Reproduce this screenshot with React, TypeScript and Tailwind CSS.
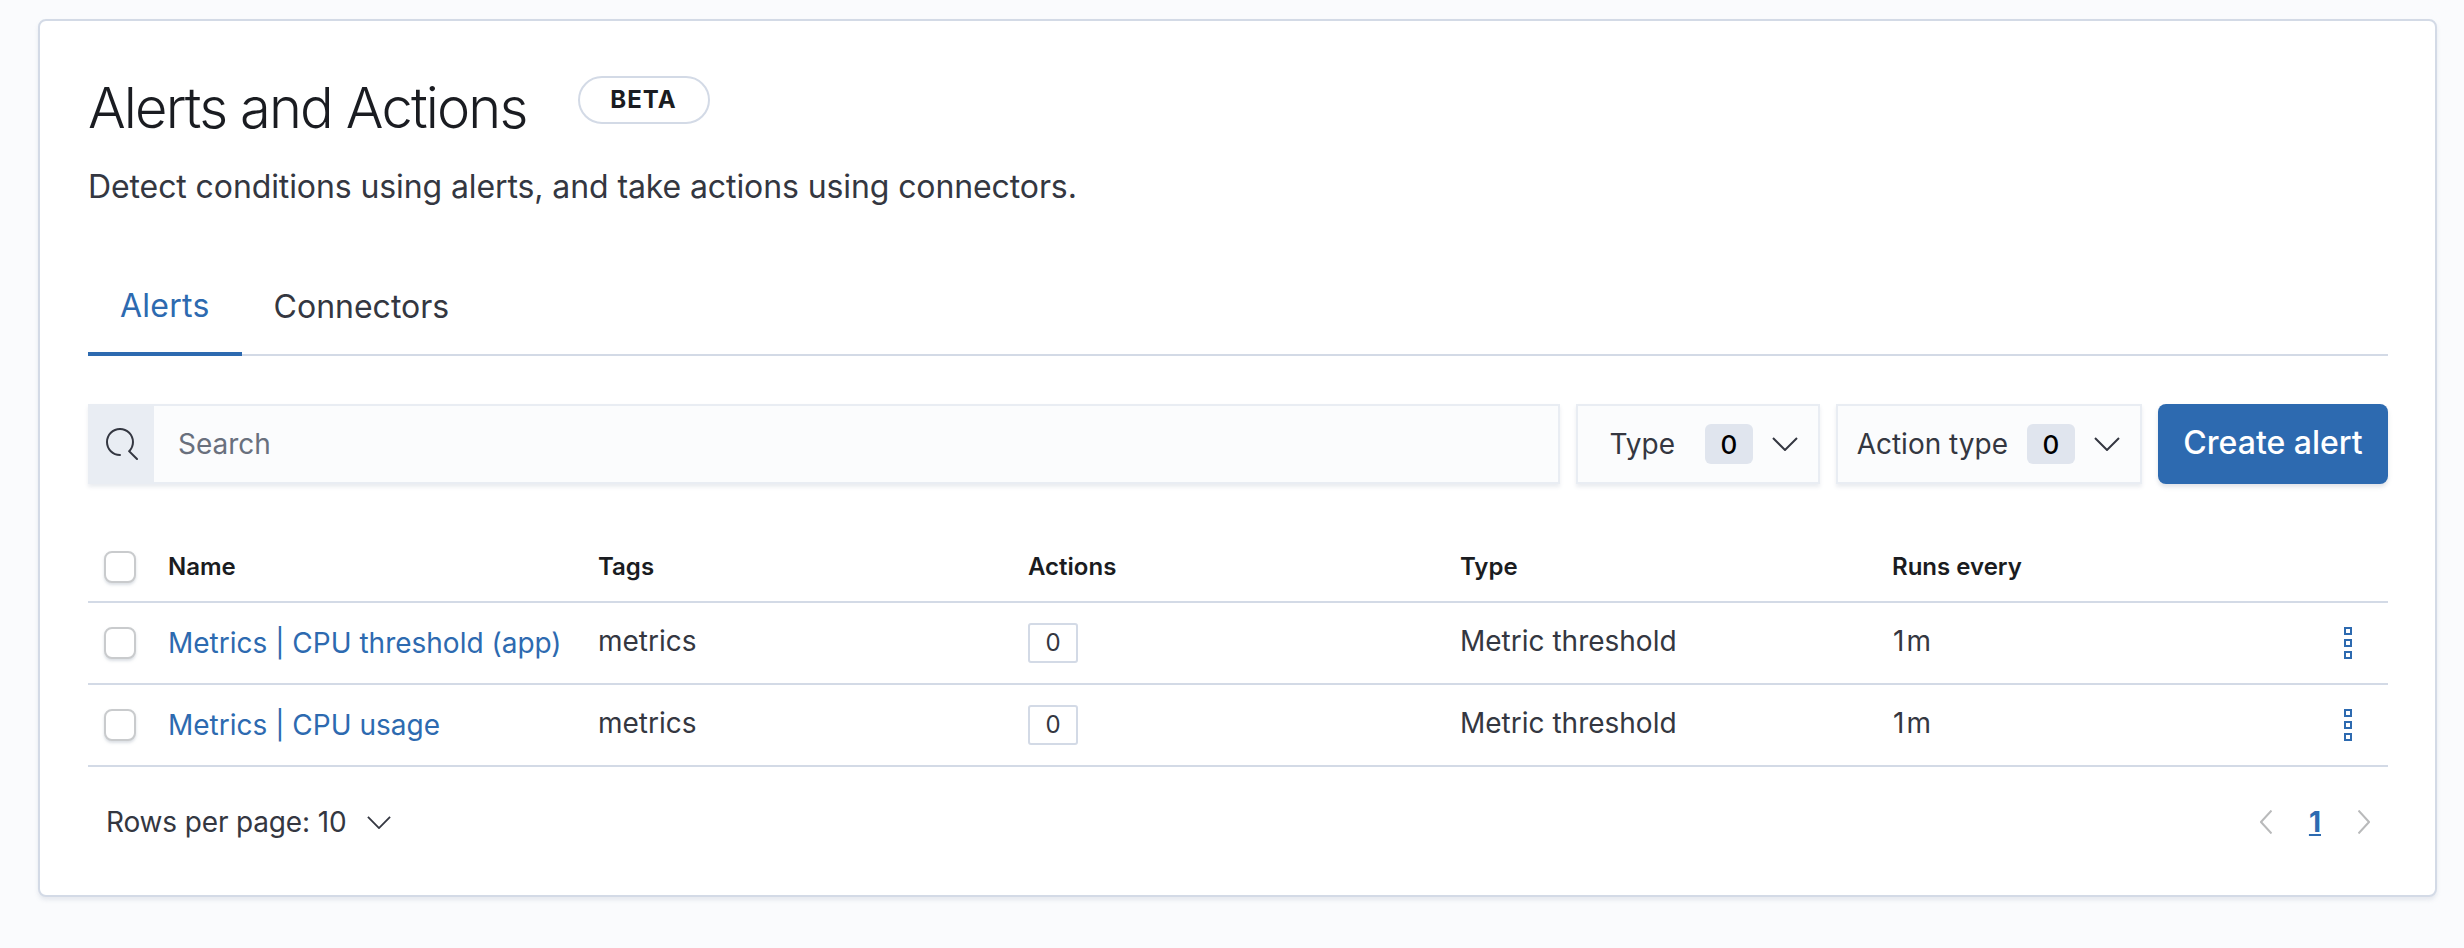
const FONT = "font-['Inter',sans-serif]";

const Chevron = ({ className }: { className?: string }) => (
  <svg viewBox="0 0 26 14" fill="none" stroke="currentColor" strokeWidth="2" className={className}>
    <path d="M1 1l12 12L25 1" />
  </svg>
);

const SearchIcon = () => (
  <svg viewBox="0 0 16 16" className="h-8 w-8 text-[#343741]" fill="currentColor">
    <path d="M11.271 11.978l3.872 3.873a.502.502 0 00.708 0 .502.502 0 000-.708l-3.565-3.564c2.38-2.747 2.267-6.923-.342-9.532-2.73-2.73-7.17-2.73-9.898 0-2.728 2.729-2.728 7.17 0 9.9a6.955 6.955 0 004.949 2.05.5.5 0 000-1 5.96 5.96 0 01-4.242-1.757 6.01 6.01 0 010-8.486 6.004 6.004 0 018.484 0 6.01 6.01 0 010 8.486.5.5 0 00.034.738z" />
  </svg>
);

const Checkbox = () => (
  <div className="h-8 w-8 rounded-[8px] border-2 border-[#c9cbcd] bg-white shadow-[0_2px_3px_rgba(152,162,179,0.35)]" />
);

const Dots = () => (
  <div className="flex flex-col gap-1">
    <div className="h-2 w-2 border-2 border-[#2d6ab0]" />
    <div className="h-2 w-2 border-2 border-[#2d6ab0]" />
    <div className="h-2 w-2 border-2 border-[#2d6ab0]" />
  </div>
);

const FilterButton = ({ label, widthClass, gapClass }: { label: string; widthClass: string; gapClass: string }) => (
  <div className={`flex h-[80px] items-center justify-end border-2 border-[#e9edf3] bg-[#fbfcfd] pr-[20px] shadow-[0_3px_4px_rgba(152,162,179,0.2)] ${widthClass}`}>
    <span className={`text-[28px] whitespace-nowrap text-[#343741] ${gapClass}`}>{label}</span>
    <span className="flex h-10 w-12 items-center justify-center rounded-[6px] bg-[#e0e5ee] text-[26px] font-medium text-[#000000]">0</span>
    <Chevron className="ml-[19px] h-[14px] w-[26px] text-[#343741]" />
  </div>
);

const HeaderCell = ({ children }: { children: React.ReactNode }) => (
  <div className="text-[24px] font-semibold text-[#1a1c21]">{children}</div>
);

const rows = [{ name: "Metrics | CPU threshold (app)" }, { name: "Metrics | CPU usage" }];

const App = () => {
  return (
    <div className={`h-[948px] w-[2464px] overflow-hidden bg-[#fafbfd] pt-[19px] pl-[38px] ${FONT}`}>
      <div className="h-[878px] w-[2399px] rounded-[8px] border-2 border-[#d3dae6] bg-white pt-[47px] pr-[47px] pl-[48px] shadow-[0_3px_4px_rgba(152,162,179,0.2)]">
        {/* page header */}
        <div className="flex items-start">
          <h1 className="text-[56px] leading-[80px] font-light tracking-[-1.85px] text-[#1a1c21]">Alerts and Actions</h1>
          <span className="mt-[8px] ml-[51px] flex h-[48px] w-[132px] items-center justify-center rounded-full border-2 border-[#d3dae6] text-[24px] font-bold tracking-[1px] text-[#1a1c21]">
            BETA
          </span>
        </div>
        <p className="mt-[15px] text-[32px] leading-[48px] tracking-[-0.1px] text-[#343741]">
          Detect conditions using alerts, and take actions using connectors.
        </p>

        {/* tabs */}
        <div className="mt-[49px] flex h-[96px] border-b-2 border-[#d3dae6]">
          <div className="-mb-[2px] flex items-center border-b-4 border-[#2d6ab0] px-8 text-[32px] tracking-[0.25px] text-[#2d6ab0]">Alerts</div>
          <div className="flex items-center px-8 text-[32px] text-[#343741]">Connectors</div>
        </div>

        {/* toolbar */}
        <div className="mt-[48px] flex gap-4">
          <div className="flex h-[80px] flex-1 border-2 border-[#e9edf3] bg-[#fbfcfd] shadow-[0_3px_4px_rgba(152,162,179,0.2)]">
            <div className="flex w-[64px] items-center justify-center bg-[#e9edf3]">
              <SearchIcon />
            </div>
            <div className="flex items-center pl-[24px] pb-[1px] text-[28px] text-[#69707d]">Search</div>
          </div>
          <FilterButton label="Type" widthClass="w-[244px]" gapClass="mr-[30px]" />
          <FilterButton label="Action type" widthClass="w-[306px]" gapClass="mr-[19px]" />
          <button className="h-[80px] w-[230px] rounded-[8px] bg-[#2d6ab0] pb-[2px] text-[32px] font-medium text-white shadow-[0_3px_4px_rgba(152,162,179,0.3)]">
            Create alert
          </button>
        </div>

        {/* table */}
        <div className="mt-[37px]">
          <div className="grid h-[82px] grid-cols-[80px_430px_430px_432px_432px_1fr] items-center border-b-2 border-[#d3dae6] pt-[11px]">
            <div className="pl-[16px]">
              <Checkbox />
            </div>
            <HeaderCell>Name</HeaderCell>
            <HeaderCell>Tags</HeaderCell>
            <HeaderCell>Actions</HeaderCell>
            <HeaderCell>Type</HeaderCell>
            <HeaderCell>Runs every</HeaderCell>
          </div>
          {rows.map((row) => (
            <div key={row.name} className="grid h-[82px] grid-cols-[80px_430px_430px_432px_432px_1fr] items-center border-b-2 border-[#d3dae6]">
              <div className="pl-[16px]">
                <Checkbox />
              </div>
              <div className="pb-[1px] text-[28px] text-[#2d6ab0]">{row.name}</div>
              <div className="pb-[5px] text-[28px] text-[#343741]">metrics</div>
              <div>
                <span className="flex h-[40px] w-[50px] items-center justify-center rounded-[3px] border-2 border-[#d3dae6] bg-white text-[24px] text-[#343741]">0</span>
              </div>
              <div className="pb-[5px] text-[28px] text-[#343741]">Metric threshold</div>
              <div className="flex items-center justify-between pr-[36px]">
                <span className="pb-[5px] pl-[1px] text-[28px] tracking-[2px] text-[#343741]">1m</span>
                <Dots />
              </div>
            </div>
          ))}
        </div>

        {/* footer */}
        <div className="mt-[34px] flex items-center justify-between pr-[18px] pl-[18px]">
          <div className="flex items-center text-[28px] tracking-[-0.15px] text-[#343741]">
            Rows per page: 10
            <Chevron className="ml-[21px] h-[13px] w-[24px]" />
          </div>
          <div className="flex items-center">
            <svg viewBox="0 0 12 24" fill="none" stroke="#b9babb" strokeWidth="2" className="h-6 w-3">
              <path d="M11.5 .5L1 12l10.5 11.5" />
            </svg>
            <span className="mx-[37px] text-[28px] leading-[32px] font-bold text-[#2d6ab0] underline">1</span>
            <svg viewBox="0 0 12 24" fill="none" stroke="#b9babb" strokeWidth="2" className="h-6 w-3">
              <path d="M.5 .5L11 12 .5 23.5" />
            </svg>
          </div>
        </div>
      </div>
    </div>
  );
};

export default App;
